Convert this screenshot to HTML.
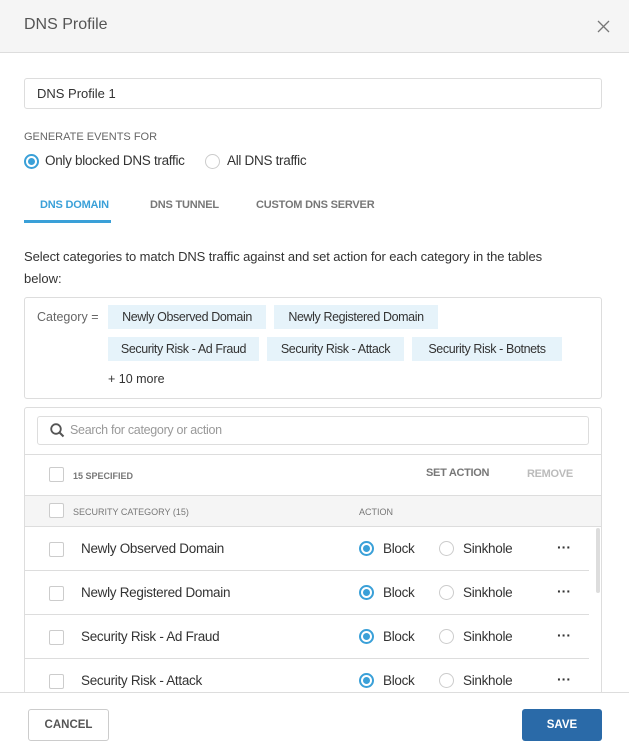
<!DOCTYPE html>
<html><head><style>
*{box-sizing:border-box;margin:0;padding:0}
body{width:629px;height:754px;overflow:hidden;background:#fff;font-family:"Liberation Sans",sans-serif;color:#333;position:relative}
.a{position:absolute;white-space:nowrap}
.hdr{left:0;top:0;width:629px;height:53px;background:#f5f5f5;border-bottom:1px solid #ddd}
.rad{position:absolute;width:15px;height:15px;border-radius:50%;border:1px solid #ccc;background:#fff}
.rad.on{border:2px solid #3aa0d8;background:#fff}
.rad.on::after{content:"";position:absolute;left:2px;top:2px;width:7px;height:7px;border-radius:50%;background:#3aa0d8}
.cb{position:absolute;width:15px;height:15px;border:1px solid #ccc;border-radius:2px;background:#fff}
.tag{position:absolute;height:24px;background:#e6f3fa;font-size:12.5px;line-height:24px;padding:0 6px;color:#333;letter-spacing:-0.4px;white-space:nowrap;text-align:center;overflow:hidden}
.sm{font-size:9.5px;color:#777;font-weight:bold}
.row{position:absolute;left:25px;width:564px;height:44px;border-bottom:1px solid #ddd}
.rt{font-size:13.5px;color:#333;letter-spacing:-0.3px}
.dots{font-size:14px;font-weight:bold;color:#333}
</style></head><body>
<div class="a hdr"></div>
<div class="a" style="left:24px;top:16px;font-size:16px;color:#555">DNS Profile</div>
<svg class="a" style="left:597px;top:20px" width="13" height="13"><path d="M1 1L12 12M12 1L1 12" stroke="#777" stroke-width="1.3"/></svg>

<div class="a" style="left:24px;top:78px;width:578px;height:31px;border:1px solid #ddd;border-radius:3px"></div>
<div class="a" style="left:37px;top:86px;font-size:13px">DNS Profile 1</div>

<div class="a" style="left:24px;top:131px;font-size:11px;color:#666">GENERATE EVENTS FOR</div>
<div class="rad on" style="left:24px;top:154px"></div>
<div class="a" style="left:45px;top:153px;font-size:13.5px;letter-spacing:-0.3px">Only blocked DNS traffic</div>
<div class="rad" style="left:205px;top:154px"></div>
<div class="a" style="left:227px;top:153px;font-size:13.5px;letter-spacing:-0.3px">All DNS traffic</div>

<div class="a" style="left:40px;top:199px;font-size:11px;font-weight:bold;color:#3aa0d8;letter-spacing:-0.2px">DNS DOMAIN</div>
<div class="a" style="left:150px;top:199px;font-size:11px;font-weight:bold;color:#777;letter-spacing:-0.2px">DNS TUNNEL</div>
<div class="a" style="left:256px;top:199px;font-size:11px;font-weight:bold;color:#777;letter-spacing:-0.2px">CUSTOM DNS SERVER</div>
<div class="a" style="left:24px;top:220px;width:87px;height:3px;background:#3aa0d8"></div>

<div class="a" style="left:24px;top:249px;font-size:13px;letter-spacing:-0.1px">Select categories to match DNS traffic against and set action for each category in the tables</div>
<div class="a" style="left:24px;top:271px;font-size:13px">below:</div>

<div class="a" style="left:24px;top:297px;width:578px;height:102px;border:1px solid #ddd;border-radius:3px"></div>
<div class="a" style="left:37px;top:310px;font-size:12.5px;color:#666">Category =</div>
<div class="tag" style="left:108px;top:305px;width:158px">Newly Observed Domain</div>
<div class="tag" style="left:274px;top:305px;width:164px">Newly Registered Domain</div>
<div class="tag" style="left:108px;top:337px;width:151px">Security Risk - Ad Fraud</div>
<div class="tag" style="left:267px;top:337px;width:137px">Security Risk - Attack</div>
<div class="tag" style="left:412px;top:337px;width:150px">Security Risk - Botnets</div>
<div class="a" style="left:108px;top:372px;font-size:12.5px">+ 10 more</div>

<div class="a" style="left:24px;top:407px;width:578px;height:300px;border:1px solid #ddd;border-radius:3px"></div>
<div class="a" style="left:37px;top:416px;width:552px;height:29px;border:1px solid #ddd;border-radius:3px"></div>
<svg class="a" style="left:50px;top:423px" width="15" height="15"><circle cx="6" cy="6" r="4.8" fill="none" stroke="#555" stroke-width="1.8"/><path d="M9.5 9.5L13.5 13.5" stroke="#555" stroke-width="2"/></svg>
<div class="a" style="left:70px;top:423px;font-size:12.5px;color:#999;letter-spacing:-0.3px">Search for category or action</div>
<div class="a" style="left:25px;top:454px;width:576px;border-top:1px solid #ddd"></div>
<div class="cb" style="left:49px;top:467px"></div>
<div class="a sm" style="left:73px;top:471px;font-size:9px">15 SPECIFIED</div>
<div class="a" style="left:426px;top:467px;font-size:11px;font-weight:bold;color:#777;letter-spacing:-0.3px">SET ACTION</div>
<div class="a" style="left:527px;top:468px;font-size:11px;font-weight:bold;color:#bbb;letter-spacing:-0.3px">REMOVE</div>
<div class="a" style="left:25px;top:495px;width:576px;height:32px;background:#f5f5f5;border-top:1px solid #ddd;border-bottom:1px solid #ddd"></div>
<div class="cb" style="left:49px;top:503px"></div>
<div class="a sm" style="left:73px;top:507px;font-size:9px;font-weight:normal;color:#777">SECURITY CATEGORY (15)</div>
<div class="a sm" style="left:359px;top:507px;font-size:9px;font-weight:normal;color:#777">ACTION</div>
<div class="a" style="left:596px;top:528px;width:4px;height:65px;background:#ddd;border-radius:2px"></div>

<div class="row" style="top:527px"></div>
<div class="row" style="top:571px"></div>
<div class="row" style="top:615px"></div>

<div class="cb" style="left:49px;top:542px"></div><div class="a rt" style="left:81px;top:541px">Newly Observed Domain</div>
<div class="rad on" style="left:359px;top:541px"></div><div class="a rt" style="left:383px;top:541px">Block</div>
<div class="rad" style="left:439px;top:541px"></div><div class="a rt" style="left:463px;top:541px">Sinkhole</div>
<div class="a dots" style="left:557px;top:539px">···</div>

<div class="cb" style="left:49px;top:586px"></div><div class="a rt" style="left:81px;top:585px">Newly Registered Domain</div>
<div class="rad on" style="left:359px;top:585px"></div><div class="a rt" style="left:383px;top:585px">Block</div>
<div class="rad" style="left:439px;top:585px"></div><div class="a rt" style="left:463px;top:585px">Sinkhole</div>
<div class="a dots" style="left:557px;top:583px">···</div>

<div class="cb" style="left:49px;top:630px"></div><div class="a rt" style="left:81px;top:629px">Security Risk - Ad Fraud</div>
<div class="rad on" style="left:359px;top:629px"></div><div class="a rt" style="left:383px;top:629px">Block</div>
<div class="rad" style="left:439px;top:629px"></div><div class="a rt" style="left:463px;top:629px">Sinkhole</div>
<div class="a dots" style="left:557px;top:627px">···</div>

<div class="cb" style="left:49px;top:674px"></div><div class="a rt" style="left:81px;top:673px">Security Risk - Attack</div>
<div class="rad on" style="left:359px;top:673px"></div><div class="a rt" style="left:383px;top:673px">Block</div>
<div class="rad" style="left:439px;top:673px"></div><div class="a rt" style="left:463px;top:673px">Sinkhole</div>
<div class="a dots" style="left:557px;top:671px">···</div>

<div class="a" style="left:0;top:692px;width:629px;height:62px;background:#fff;border-top:1px solid #ddd"></div>
<div class="a" style="left:28px;top:709px;width:81px;height:32px;border:1px solid #ccc;border-radius:3px;font-size:11.5px;font-weight:bold;color:#555;text-align:center;line-height:30px">CANCEL</div>
<div class="a" style="left:522px;top:709px;width:80px;height:32px;background:#2a6aa8;border-radius:3px;font-size:11.5px;font-weight:bold;color:#fff;text-align:center;line-height:32px">SAVE</div>
</body></html>
